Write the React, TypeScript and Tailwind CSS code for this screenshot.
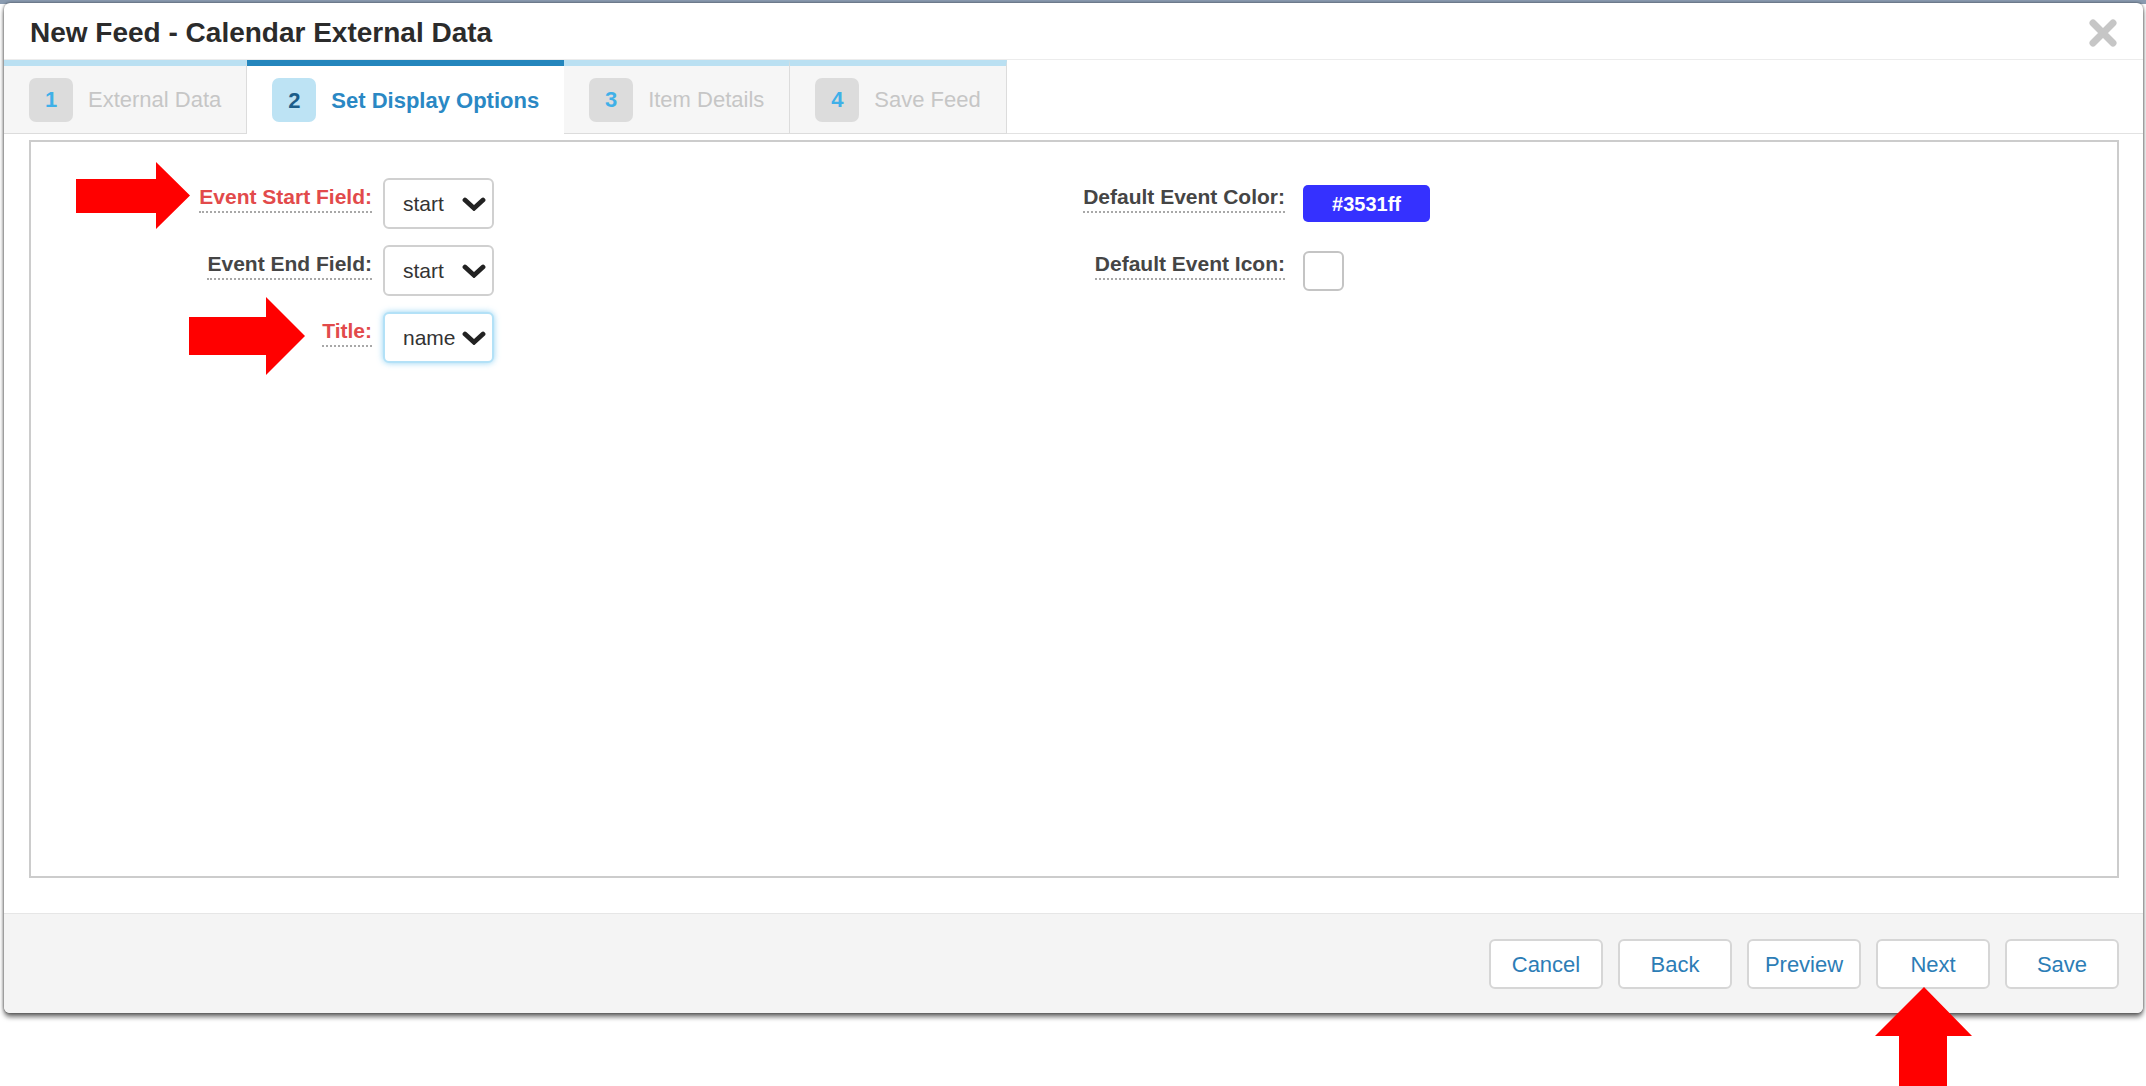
import React from "react";

const font = { fontFamily: '"Liberation Sans", Arial, sans-serif' };

type Tab = { n: number; label: string; active?: boolean };

const tabs: Tab[] = [
  { n: 1, label: "External Data" },
  { n: 2, label: "Set Display Options", active: true },
  { n: 3, label: "Item Details" },
  { n: 4, label: "Save Feed" },
];

function Chevron() {
  return (
    <svg width="24" height="14" viewBox="0 0 24 14" className="shrink-0">
      <polyline
        points="3,3 12,11.2 21,3"
        fill="none"
        stroke="#222"
        strokeWidth="4.8"
        strokeLinecap="round"
        strokeLinejoin="miter"
      />
    </svg>
  );
}

function Label({ text, red }: { text: string; red?: boolean }) {
  return (
    <span
      className={`mb-[10px] border-b-2 border-dotted border-[#a8a8a8] pb-[2px] text-[21px] font-bold leading-[24px] ${
        red ? "text-[#e24a4b]" : "text-[#454545]"
      }`}
    >
      {text}
    </span>
  );
}

function Select({ value, focused }: { value: string; focused?: boolean }) {
  return (
    <div
      className={`flex h-[51px] w-[111px] items-center justify-between rounded-[6px] border-2 bg-white pl-[18px] pr-[6px] text-[21px] text-[#333] ${
        focused
          ? "border-[#b3e1f7] shadow-[0_0_6px_rgba(120,200,240,0.8)]"
          : "border-[#d0d0d0]"
      }`}
    >
      <span>{value}</span>
      <Chevron />
    </div>
  );
}

function FieldRow({
  label,
  red,
  children,
  labelWidth,
  gap,
}: {
  label: string;
  red?: boolean;
  children: React.ReactNode;
  labelWidth: string;
  gap: string;
}) {
  return (
    <div className={`flex h-[67px] items-center ${gap}`}>
      <div className={`flex justify-end ${labelWidth}`}>
        <Label text={label} red={red} />
      </div>
      {children}
    </div>
  );
}

export default function App() {
  return (
    <div
      className="relative h-[1086px] w-full overflow-hidden bg-[linear-gradient(#8a9bb0_0,#8a9bb0_4px,#ffffff_4px)]"
      style={font}
    >
      {/* modal */}
      <div className="ml-[4px] mt-[3px] flex h-[1010px] w-[2139px] flex-col overflow-hidden rounded-[6px] bg-white shadow-[0_0_3px_rgba(0,0,0,0.55),0_4px_5px_rgba(0,0,0,0.55)]">
        {/* header */}
        <div className="flex h-[57px] shrink-0 items-center justify-between border-b border-[#ececec] pl-[26px] pr-[26px] pt-[3px]">
          <h1 className="text-[28px] font-bold text-[#2b2b2b]">
            New Feed - Calendar External Data
          </h1>
          <svg width="28" height="28" viewBox="0 0 28 28">
            <path
              d="M4 4 L24 24 M24 4 L4 24"
              stroke="#c6c6c6"
              strokeWidth="7"
              strokeLinecap="round"
            />
          </svg>
        </div>

        {/* tabs */}
        <div className="flex h-[74px] shrink-0">
          {tabs.map((t) =>
            t.active ? (
              <div
                key={t.n}
                className="flex h-full items-center gap-[15px] border-t-[6px] border-[#2486bd] bg-white px-[25px]"
              >
                <span className="flex h-[44px] w-[44px] items-center justify-center rounded-[7px] bg-[#bde3f4] text-[22px] font-bold text-[#1b5d89]">
                  {t.n}
                </span>
                <span className="text-[22px] font-bold text-[#2a88c4]">
                  {t.label}
                </span>
              </div>
            ) : (
              <div
                key={t.n}
                className="flex h-full items-center gap-[15px] border-r border-b border-t-[6px] border-r-[#dcdcdc] border-b-[#dcdcdc] border-t-[#bae0f2] bg-[#f6f6f6] px-[25px]"
              >
                <span className="flex h-[44px] w-[44px] items-center justify-center rounded-[7px] bg-[#dcdcdc] text-[22px] font-bold text-[#3fb0e8]">
                  {t.n}
                </span>
                <span className="text-[22px] text-[#c6c6c6]">{t.label}</span>
              </div>
            )
          )}
          <div className="h-full flex-1 border-b border-[#e2e2e2]" />
        </div>

        {/* body */}
        <div className="flex-1 pl-[25px] pr-[24px] pt-[6px]">
          <div className="flex h-[738px] border-2 border-[#cccccc] pt-[28px]">
            <div className="w-[1043px]">
              <FieldRow label="Event Start Field:" red labelWidth="w-[341px]" gap="gap-[11px]">
                <Select value="start" />
              </FieldRow>
              <FieldRow label="Event End Field:" labelWidth="w-[341px]" gap="gap-[11px]">
                <Select value="start" />
              </FieldRow>
              <FieldRow label="Title:" red labelWidth="w-[341px]" gap="gap-[11px]">
                <Select value="name" focused />
              </FieldRow>
            </div>
            <div>
              <FieldRow label="Default Event Color:" labelWidth="w-[211px]" gap="gap-[18px]">
                <div className="flex h-[37px] w-[127px] items-center justify-center rounded-[5px] bg-[#3531ff] text-[20px] font-bold text-white">
                  #3531ff
                </div>
              </FieldRow>
              <FieldRow label="Default Event Icon:" labelWidth="w-[211px]" gap="gap-[18px]">
                <div className="h-[40px] w-[41px] rounded-[6px] border-2 border-[#c4c4c4] bg-white" />
              </FieldRow>
            </div>
          </div>
        </div>

        {/* footer */}
        <div className="flex h-[100px] shrink-0 justify-end gap-[15px] border-t border-[#e6e6e6] bg-[#f4f4f4] pr-[24px] pt-[25px]">
          {["Cancel", "Back", "Preview", "Next", "Save"].map((b) => (
            <button
              key={b}
              type="button"
              className="h-[50px] w-[114px] rounded-[6px] border-2 border-[#d6d6d6] bg-white text-[22px] text-[#2c7db6]"
            >
              {b}
            </button>
          ))}
        </div>
      </div>

      {/* annotation arrows */}
      <svg
        className="pointer-events-none absolute left-0 top-0"
        width="2146"
        height="1086"
        viewBox="0 0 2146 1086"
      >
        <polygon
          fill="#ff0000"
          points="76,179 156,179 156,162 190,195.5 156,229 156,213 76,213"
        />
        <polygon
          fill="#ff0000"
          points="189,317 266,317 266,297 305,336 266,375 266,355 189,355"
        />
        <polygon
          fill="#ff0000"
          points="1899,1086 1899,1036 1875,1036 1924,987 1972,1036 1947,1036 1947,1086"
        />
      </svg>
    </div>
  );
}
